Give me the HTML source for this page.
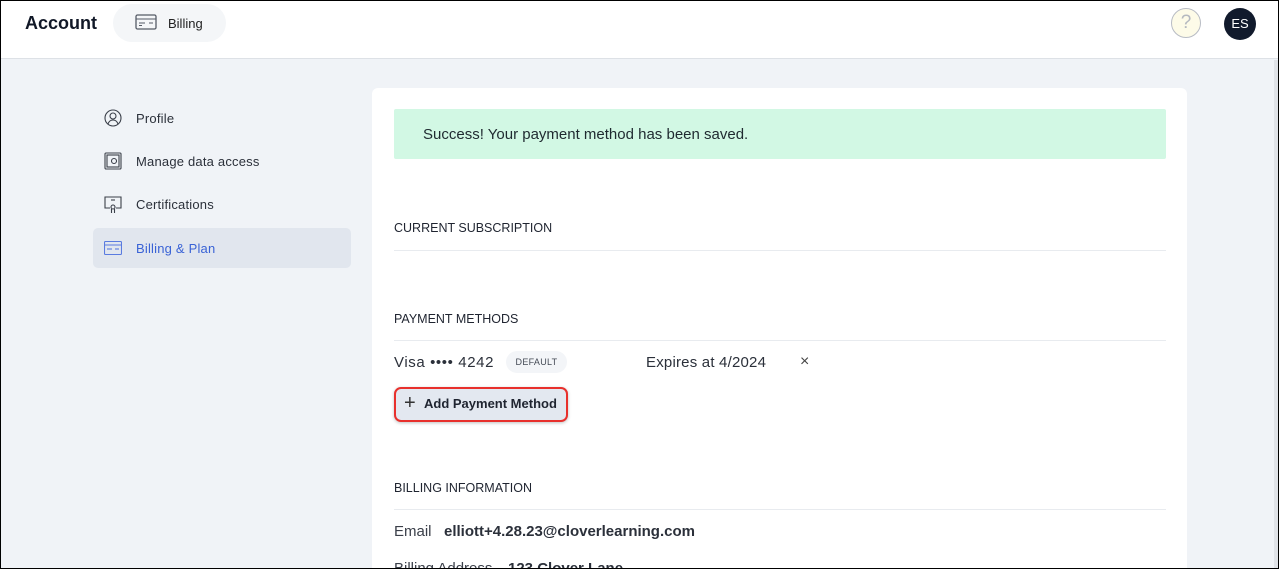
<!DOCTYPE html>
<html><head><style>
*{box-sizing:border-box;margin:0;padding:0}
html,body{width:1279px;height:569px;overflow:hidden}
body{font-family:"Liberation Sans",sans-serif;background:#f0f3f7;position:relative;color:#1f2430}
.frame{position:absolute;left:0;top:0;width:1279px;height:569px;border:1px solid #000;pointer-events:none;z-index:10}
.hdr{position:absolute;left:0;top:0;width:1279px;height:59px;background:#fff;border-bottom:1px solid #dde1e6}
.t{position:absolute;white-space:nowrap}
.card{position:absolute;left:372px;top:88px;width:815px;height:490px;background:#fff;border-radius:6px}
.hr{position:absolute;left:394px;width:772px;height:1px;background:#e8ebef}
.sec{font-size:12.5px;color:#1f2430}
.nav{font-size:13px;color:#2b303a;letter-spacing:.2px}
</style></head><body>
<div class="hdr">
<div class="t" style="left:25px;top:13px;font-size:18px;font-weight:bold;color:#111827">Account</div>
<div style="position:absolute;left:113px;top:4px;width:113px;height:38px;border-radius:19px;background:#f4f6f8"></div>
<svg style="position:absolute;left:135px;top:14px" width="22" height="16" viewBox="0 0 22 16"><rect x="1" y="1" width="20" height="14" rx="1.5" fill="none" stroke="#555b66" stroke-width="1.3"/><line x1="1" y1="5" x2="21" y2="5" stroke="#555b66" stroke-width="1"/><line x1="4" y1="9" x2="10" y2="9" stroke="#555b66"/><line x1="4" y1="11.5" x2="7" y2="11.5" stroke="#555b66"/><line x1="14" y1="9" x2="18" y2="9" stroke="#555b66"/></svg>
<div class="t" style="left:168px;top:16px;font-size:13px;color:#222">Billing</div>
<div style="position:absolute;left:1171px;top:8px;width:30px;height:30px;border-radius:50%;background:#fdfbe8;border:1px solid #b8bcc4;text-align:center;font-size:19px;line-height:28px;color:#b5b9c0">?</div>
<div style="position:absolute;left:1224px;top:8px;width:32px;height:32px;border-radius:50%;background:#111a2c;color:#fff;text-align:center;font-size:13px;line-height:32px">ES</div>
</div>
<div style="position:absolute;left:1274px;top:60px;width:4px;height:509px;background:#e0e3e8"></div>

<svg style="position:absolute;left:104px;top:109px" width="18" height="18" viewBox="0 0 18 18" fill="none" stroke="#3a3f49" stroke-width="1.1"><circle cx="9" cy="9" r="8"/><circle cx="9" cy="7" r="3"/><path d="M4 15c1-3 3-4 5-4s4 1 5 4"/></svg>
<div class="t nav" style="left:136px;top:111px">Profile</div>
<svg style="position:absolute;left:104px;top:152px" width="18" height="18" viewBox="0 0 18 18" fill="none" stroke="#3a3f49" stroke-width="1.1"><rect x="1" y="1" width="16" height="16" rx="1"/><rect x="3" y="3" width="12" height="12"/><circle cx="10" cy="9" r="2.5"/></svg>
<div class="t nav" style="left:136px;top:154px">Manage data access</div>
<svg style="position:absolute;left:104px;top:196px" width="18" height="18" viewBox="0 0 18 18" fill="none" stroke="#3a3f49" stroke-width="1.1"><path d="M6 12H1V1h16v11h-5"/><line x1="7" y1="4" x2="11" y2="4"/><circle cx="9" cy="11" r="2"/><path d="M7.5 13v4M10.5 13v4"/></svg>
<div class="t nav" style="left:136px;top:197px">Certifications</div>
<div style="position:absolute;left:93px;top:228px;width:258px;height:40px;border-radius:5px;background:#e1e6ee"></div>
<svg style="position:absolute;left:104px;top:241px" width="18" height="14" viewBox="0 0 18 14" fill="none" stroke="#5a7be0" stroke-width="1.1"><rect x=".5" y=".5" width="17" height="13" rx="1"/><line x1=".5" y1="4" x2="17.5" y2="4"/><line x1="3" y1="8" x2="8" y2="8"/><line x1="11" y1="8" x2="15" y2="8"/></svg>
<div class="t nav" style="left:136px;top:241px;color:#3a63d6">Billing &amp; Plan</div>

<div class="card"></div>
<div style="position:absolute;left:394px;top:109px;width:772px;height:50px;background:#d2f8e4;border-radius:2px"></div>
<div class="t" style="left:423px;top:126px;font-size:15px;color:#1f2a30">Success! Your payment method has been saved.</div>
<div class="t sec" style="left:394px;top:221px">CURRENT SUBSCRIPTION</div>
<div class="hr" style="top:250px"></div>
<div class="t sec" style="left:394px;top:312px">PAYMENT METHODS</div>
<div class="hr" style="top:340px"></div>
<div class="t" style="left:394px;top:354px;font-size:15px;color:#2b303a;letter-spacing:.6px">Visa •••• 4242</div>
<div style="position:absolute;left:506px;top:351px;width:61px;height:22px;border-radius:11px;background:#f3f5f8;font-size:9px;color:#444a55;text-align:center;line-height:22px;letter-spacing:.3px">DEFAULT</div>
<div class="t" style="left:646px;top:354px;font-size:15px;color:#2b303a;letter-spacing:.2px">Expires at 4/2024</div>
<div class="t" style="left:800px;top:353px;font-size:16px;color:#444">×</div>
<div style="position:absolute;left:394px;top:387px;width:174px;height:35px;border:2px solid #e8302c;border-radius:7px;background:#e3e8f0;box-shadow:0 1px 3px rgba(0,0,0,.25)"></div>
<div class="t" style="left:404px;top:392px;font-size:20px;font-weight:300;color:#333">+</div>
<div class="t" style="left:424px;top:396px;font-size:13px;font-weight:bold;color:#1f2430">Add Payment Method</div>
<div class="t sec" style="left:394px;top:481px">BILLING INFORMATION</div>
<div class="hr" style="top:509px"></div>
<div class="t" style="left:394px;top:523px;font-size:15px;color:#3a3f49">Email</div>
<div class="t" style="left:444px;top:523px;font-size:15px;font-weight:bold;color:#2b303a">elliott+4.28.23@cloverlearning.com</div>
<div class="t" style="left:394px;top:560px;font-size:15px;color:#3a3f49">Billing Address</div>
<div class="t" style="left:508px;top:560px;font-size:15px;font-weight:bold;color:#2b303a">123 Clover Lane</div>
<div class="frame"></div>
</body></html>
